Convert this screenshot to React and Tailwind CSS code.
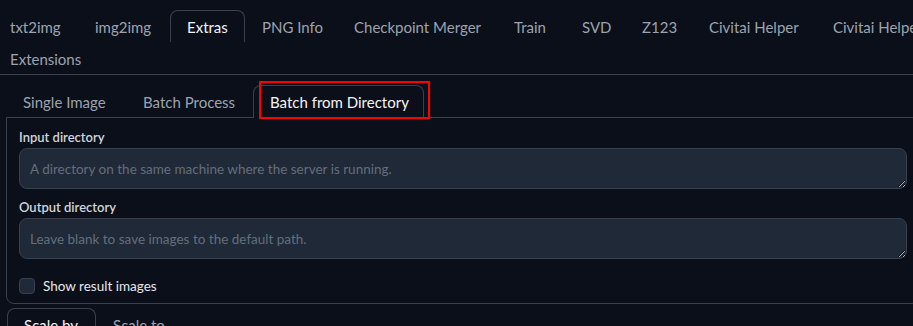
import React from "react";

const topTabs = [
  { label: "txt2img", w: 85 },
  { label: "img2img", w: 92 },
  { label: "Extras", w: 75, active: true },
  { label: "PNG Info", w: 92 },
  { label: "Checkpoint Merger", w: 160 },
  { label: "Train", w: 68 },
  { label: "SVD", w: 60 },
  { label: "Z123", w: 67 },
  { label: "Civitai Helper", w: 124 },
  { label: "Civitai Helper", w: 124 },
];

const subTabs = [
  { label: "Single Image", w: 120 },
  { label: "Batch Process", w: 127 },
  { label: "Batch from Directory", w: 171, active: true },
];

const Tab = ({ label, w, active }) => (
  <div
    style={{ width: w }}
    className={
      "shrink-0 h-[32px] pl-[16px] pt-[2px] flex items-center whitespace-nowrap text-[15px] border border-b-0 rounded-t-lg " +
      (active
        ? "border-[#374151] text-[#f3f4f6] bg-[#0b0f19]"
        : "border-transparent text-[#9ca3af]")
    }
  >
    {label}
  </div>
);

const Field = ({ label, placeholder, className = "" }) => (
  <div className={className}>
    <div className="h-[18px] leading-[18px] text-[13px] font-semibold text-[#d1d5db]">
      {label}
    </div>
    <textarea
      rows={1}
      placeholder={placeholder}
      className="mt-[2px] block w-full h-[41px] resize-y rounded-lg border border-[#374151] bg-[#1f2937] px-[10px] pt-[10px] text-[13.5px] leading-[20px] text-[#e5e7eb] placeholder:text-[#646e7d] outline-none"
    />
  </div>
);

export default function App() {
  return (
    <div
      className="w-[913px] h-[326px] overflow-hidden bg-[#0b0f19]"
      style={{ fontFamily: "Lato, 'Noto Sans', sans-serif" }}
    >
      <div className="w-[920px]">
        {/* main tabs */}
        <div className="pt-[10px] border-b border-[#374151]">
          <div className="flex ml-[-7px]">
            {topTabs.map((t, i) => (
              <Tab key={i} {...t} />
            ))}
          </div>
          <div className="flex ml-[-7px]">
            <Tab label="Extensions" w={110} />
          </div>
        </div>

        {/* extras sub tabs */}
        <div className="relative pt-[10px]">
          <div className="flex items-end pl-[6px]">
            {subTabs.map((t, i) =>
              t.active ? (
                <div key={i} className="relative z-10 -mb-px">
                  <div
                    style={{ width: t.w }}
                    className="h-[33px] pl-[16px] pt-px flex items-center whitespace-nowrap text-[15px] border border-b-0 rounded-t-lg border-[#374151] text-[#f3f4f6] bg-[#0b0f19]"
                  >
                    {t.label}
                  </div>
                </div>
              ) : (
                <Tab key={i} {...t} />
              )
            )}
          </div>
          <div className="absolute left-[259px] top-[6px] w-[171px] h-[38px] border-2 border-[#ff0000] z-20 pointer-events-none" />

          <div className="ml-[6px] border border-[#374151] rounded-b-lg rounded-tr-lg px-[12px] pt-[10px] pb-[9px]">
            <Field
              label="Input directory"
              placeholder="A directory on the same machine where the server is running."
            />
            <Field
              className="mt-[9px]"
              label="Output directory"
              placeholder="Leave blank to save images to the default path."
            />
            <label className="mt-[19px] flex items-center gap-[8px]">
              <span className="w-[16px] h-[16px] rounded-[4px] border border-[#374151] bg-[#1f2937]" />
              <span className="text-[13.5px] leading-[16px] text-[#e5e7eb]">
                Show result images
              </span>
            </label>
          </div>
        </div>

        {/* scale tabs */}
        <div className="mt-[4px] flex pl-[7px]">
          <Tab label="Scale by" w={89} active />
          <Tab label="Scale to" w={100} />
        </div>
      </div>
    </div>
  );
}
